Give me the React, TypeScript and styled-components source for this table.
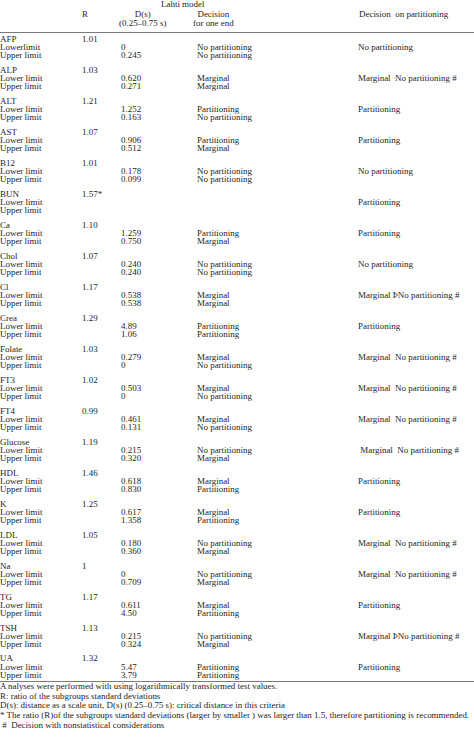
import React from "react";
import styled, { createGlobalStyle } from "styled-components";

interface iLimit {
  label: string;
  d: string;
  dec: string;
}

interface iRow {
  name: string;
  r: string;
  lower: iLimit;
  upper: iLimit;
  final: string;
}

const lo = (d: string, dec: string, label = "Lower limit"): iLimit => ({ label, d, dec });
const up = (d: string, dec: string): iLimit => ({ label: "Upper limit", d, dec });

const NO = "No partitioning";
const PA = "Partitioning";
const MA = "Marginal";
const MNO = "Marginal  No partitioning #";
const MTH = "Marginal ÞNo partitioning #";

const rows: iRow[] = [
  { name: "AFP", r: "1.01", lower: lo("0", NO, "Lowerlimit"), upper: up("0.245", NO), final: NO },
  { name: "ALP", r: "1.03", lower: lo("0.620", MA), upper: up("0.271", MA), final: MNO },
  { name: "ALT", r: "1.21", lower: lo("1.252", PA), upper: up("0.163", NO), final: PA },
  { name: "AST", r: "1.07", lower: lo("0.906", PA), upper: up("0.512", MA), final: PA },
  { name: "B12", r: "1.01", lower: lo("0.178", NO), upper: up("0.099", NO), final: NO },
  { name: "BUN", r: "1.57*", lower: lo("", ""), upper: up("", ""), final: PA },
  { name: "Ca", r: "1.10", lower: lo("1.259", PA), upper: up("0.750", MA), final: PA },
  { name: "Chol", r: "1.07", lower: lo("0.240", NO), upper: up("0.240", NO), final: NO },
  { name: "Cl", r: "1.17", lower: lo("0.538", MA), upper: up("0.538", MA), final: MTH },
  { name: "Crea", r: "1.29", lower: lo("4.89", PA), upper: up("1.06", PA), final: PA },
  { name: "Folate", r: "1.03", lower: lo("0.279", MA), upper: up("0", NO), final: MNO },
  { name: "FT3", r: "1.02", lower: lo("0.503", MA), upper: up("0", NO), final: MNO },
  { name: "FT4", r: "0.99", lower: lo("0.461", MA), upper: up("0.131", NO), final: MNO },
  { name: "Glucose", r: "1.19", lower: lo("0.215", NO), upper: up("0.320", MA), final: " " + MNO },
  { name: "HDL", r: "1.46", lower: lo("0.618", MA), upper: up("0.830", PA), final: PA },
  { name: "K", r: "1.25", lower: lo("0.617", MA), upper: up("1.358", PA), final: PA },
  { name: "LDL", r: "1.05", lower: lo("0.180", NO), upper: up("0.360", MA), final: MNO },
  { name: "Na", r: "1", lower: lo("0", NO), upper: up("0.709", MA), final: MNO },
  { name: "TG", r: "1.17", lower: lo("0.611", MA), upper: up("4.50", PA), final: PA },
  { name: "TSH", r: "1.13", lower: lo("0.215", NO), upper: up("0.324", MA), final: MTH },
  { name: "UA", r: "1.32", lower: lo("5.47", PA), upper: up("3.79", PA), final: PA },
];

const notes = [
  "R: ratio of the subgroups standard deviations",
  "D(s): distance as a scale unit, D(s) (0.25–0.75 s): critical distance in this criteria",
  "* The ratio (R)of the subgroups standard deviations (larger by smaller ) was larger than 1.5, therefore partitioning is recommended.",
  " #  Decision with nonstatistical considerations",
];

const App: React.FC = () => {
  return (
    <Page>
      <Global />
      <Head>
        <HeadCell $col="3 / 5" $row={1} $pad={40}>
          Lahti model
        </HeadCell>
        <HeadCell $col="2" $row={2} $pad={-1}>
          R
        </HeadCell>
        <HeadStack $col="3" $row={2} $shift={-2}>
          <div>D(s)</div>
          <div>(0.25–0.75 s)</div>
        </HeadStack>
        <HeadStack $col="4" $row={2} $shift={-4}>
          <div>Decision</div>
          <div>for one end</div>
        </HeadStack>
        <HeadCell $col="5" $row={2} $pad={1}>
          Decision&nbsp; on partitioning
        </HeadCell>
      </Head>

      <Body>
        {rows.map((row, i) => (
          <Group key={i}>
            <Cell>{row.name}</Cell>
            <Cell>{row.r}</Cell>
            <Cell />
            <Cell />
            <Cell />

            <Cell>{row.lower.label}</Cell>
            <Cell />
            <Cell>{row.lower.d}</Cell>
            <Cell>{row.lower.dec}</Cell>
            <Cell>{row.final}</Cell>

            <Cell>{row.upper.label}</Cell>
            <Cell />
            <Cell>{row.upper.d}</Cell>
            <Cell>{row.upper.dec}</Cell>
            <Cell />
          </Group>
        ))}
      </Body>

      <Notes>
        <Note>
          <Spaced>A</Spaced>nalyses were performed with using logarithmically transformed test values.
        </Note>
        {notes.map((n, i) => (
          <Note key={i}>{n}</Note>
        ))}
      </Notes>
    </Page>
  );
};

export default App;

const Global = createGlobalStyle`
  html, body {
    margin: 0;
    padding: 0;
    background: #ffffff;
  }
`;

const COLS = "82px 39px 76px 161px 1fr";

const Page = styled.div`
  width: 474px;
  height: 741px;
  overflow: hidden;
  font-family: "Liberation Serif", "Times New Roman", serif;
  font-size: 8.95px;
  color: #1e1e1e;
`;

const Head = styled.div`
  display: grid;
  grid-template-columns: ${COLS};
  grid-template-rows: 9.5px 19px;
  line-height: 9.5px;
  padding-bottom: 3.5px;
  border-bottom: 1.5px solid #7a7a7a;
`;

const HeadCell = styled.div<{ $col: string; $row: number; $pad: number }>`
  grid-column: ${({ $col }) => $col};
  grid-row: ${({ $row }) => $row};
  padding-left: ${({ $pad }) => $pad}px;
  white-space: nowrap;
`;

const HeadStack = styled.div<{ $col: string; $row: number; $shift: number }>`
  grid-column: ${({ $col }) => $col};
  grid-row: ${({ $row }) => $row};
  justify-self: start;
  margin-left: ${({ $shift }) => $shift}px;
  text-align: center;
  white-space: nowrap;
`;

const Body = styled.div`
  padding-top: 1.8px;
  padding-bottom: 1.5px;
  border-bottom: 1.5px solid #7a7a7a;
`;

const Group = styled.div`
  display: grid;
  grid-template-columns: ${COLS};
  grid-auto-rows: 8.3px;
  line-height: 8.3px;
  margin-bottom: 6.1px;

  &:last-child {
    margin-bottom: 0;
  }
`;

const Cell = styled.div`
  white-space: pre;
`;

const Notes = styled.div`
  display: flex;
  flex-direction: column;
  line-height: 9.8px;
`;

const Note = styled.div`
  white-space: pre;
`;

const Spaced = styled.span`
  margin-right: 1.5px;
`;
